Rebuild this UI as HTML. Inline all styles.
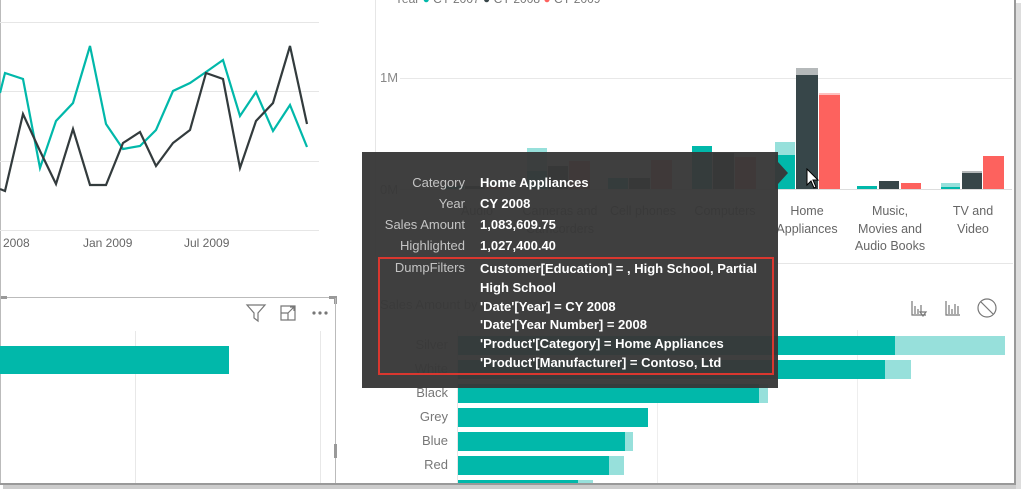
<!DOCTYPE html>
<html><head><meta charset="utf-8"><style>
body{margin:0;width:1024px;height:493px;background:#fff;position:relative;overflow:hidden;font-family:"Liberation Sans",sans-serif}
.a{position:absolute}
.t{position:absolute;font-size:12px;color:#666;white-space:nowrap}
.c{text-align:center;line-height:17.5px;font-size:12.5px;color:#666}
.lbl{position:absolute;right:0;text-align:right;width:100px;font-size:13px;color:#c4c4c4}
.val{position:absolute;left:118px;font-size:13px;color:#fff;font-weight:bold;white-space:nowrap}
</style></head><body>
<div class="a" style="left:0;top:0;width:1px;height:484px;background:#bbb"></div>
<div class="a" style="left:1014px;top:0;width:2px;height:484px;background:#999"></div>
<div class="a" style="left:0;top:483px;width:1017px;height:2px;background:#999"></div>
<div class="a" style="left:3px;top:485px;width:1018px;height:4px;background:#ccc"></div>
<div class="a" style="left:1016px;top:3px;width:5px;height:486px;background:#ddd"></div>

<svg class="a" style="left:0;top:0" width="340" height="260">
<g stroke="#e6e6e6" stroke-width="1"><line x1="0" y1="22.5" x2="319" y2="22.5"/><line x1="0" y1="91.5" x2="319" y2="91.5"/><line x1="0" y1="161.5" x2="319" y2="161.5"/><line x1="0" y1="230.5" x2="319" y2="230.5"/></g>
<polyline fill="none" stroke="#01b8aa" stroke-width="2.2" points="0,93 5,73 23,79 40,168 56,121 73,103 90,46 106,124 123,149 140,146 156,130 173,91 190,83 206,72 223,60 240,116 256,92 273,131 290,105 307,147"/>
<polyline fill="none" stroke="#333b3d" stroke-width="2.2" points="0,189 5,191 23,114 40,151 56,184 73,129 90,185 106,185 123,143 140,132 156,166 173,143 190,130 206,73 223,79 240,168 256,121 273,103 290,46 307,124"/>
</svg>
<div class="t" style="left:3px;top:236px">2008</div>
<div class="t" style="left:83px;top:236px">Jan 2009</div>
<div class="t" style="left:184px;top:236px">Jul 2009</div>

<div class="a" style="left:375px;top:0;width:1px;height:256px;background:#e6e6e6"></div>
<div class="t" style="left:395px;top:-8px;color:#777">Year <span style="color:#01b8aa">●</span> CY 2007 <span style="color:#374649">●</span> CY 2008 <span style="color:#fd625e">●</span> CY 2009</div>
<div class="t" style="left:380px;top:70px;font-size:13px;color:#888">1M</div>
<div class="a" style="left:400px;top:78px;width:612px;height:1px;background:#e8e8e8"></div>
<div class="t" style="left:380px;top:182px;font-size:13px;color:#888">0M</div>
<div class="a" style="left:400px;top:189px;width:612px;height:1px;background:#ddd"></div>
<svg class="a" style="left:0;top:0" width="1024" height="200">
<rect x="444" y="186" width="20" height="3" fill="#01b8aa"/><rect x="465" y="186" width="20" height="3" fill="#374649"/><rect x="486" y="187" width="20" height="2" fill="#fd625e"/>
<rect x="527" y="148" width="20" height="41" fill="#97e0db"/><rect x="527" y="171" width="20" height="18" fill="#01b8aa"/><rect x="548" y="166" width="20" height="23" fill="#374649"/><rect x="569" y="161" width="21" height="28" fill="#fd625e"/>
<rect x="608" y="178" width="20" height="11" fill="#01b8aa"/><rect x="629" y="178" width="21" height="11" fill="#374649"/><rect x="651" y="160" width="21" height="29" fill="#fd625e"/>
<rect x="692" y="146" width="20" height="43" fill="#01b8aa"/><rect x="713" y="153" width="21" height="36" fill="#374649"/><rect x="735" y="157" width="21" height="32" fill="#fd625e"/>
<rect x="775" y="142" width="20" height="47" fill="#97e0db"/><rect x="775" y="155" width="20" height="34" fill="#01b8aa"/>
<rect x="796" y="68" width="22" height="121" fill="#b5b9ba"/><rect x="796" y="75" width="22" height="114" fill="#374649"/>
<rect x="819" y="93" width="21" height="96" fill="#fec0bf"/><rect x="819" y="95" width="21" height="94" fill="#fd625e"/>
<rect x="857" y="186" width="20" height="3" fill="#01b8aa"/><rect x="879" y="181" width="20" height="8" fill="#374649"/><rect x="901" y="183" width="20" height="6" fill="#fd625e"/>
<rect x="941" y="183" width="19" height="6" fill="#97e0db"/><rect x="941" y="187" width="19" height="2" fill="#01b8aa"/><rect x="962" y="171" width="20" height="18" fill="#b5b9ba"/><rect x="962" y="173" width="20" height="16" fill="#374649"/><rect x="983" y="156" width="21" height="33" fill="#fd625e"/>
</svg>
<div class="t c" style="left:447px;top:203px;width:60px">Audio</div>
<div class="t c" style="left:520px;top:203px;width:80px">Cameras and<br>Camcorders</div>
<div class="t c" style="left:603px;top:203px;width:80px">Cell phones</div>
<div class="t c" style="left:685px;top:203px;width:80px">Computers</div>
<div class="t c" style="left:767px;top:203px;width:80px">Home<br>Appliances</div>
<div class="t c" style="left:850px;top:203px;width:80px">Music,<br>Movies and<br>Audio Books</div>
<div class="t c" style="left:933px;top:203px;width:80px">TV and<br>Video</div>

<div class="a" style="left:775px;top:263px;width:238px;height:1px;background:#e6e6e6"></div>
<div class="t" style="left:380px;top:297px;color:#888;font-size:13px">Sales Amount by</div>
<svg class="a" style="left:905px;top:296px" width="100" height="26" fill="none" stroke="#777" stroke-width="1.2">
<path d="M7 5v14h14M10 10v8M13 13v5M16 9v7M15 16l3 4 3-4z"/>
<path d="M41 5v14h14M44 9v9M47 13v5M50 8v10M53 10v8"/>
<circle cx="82" cy="12" r="9"/><line x1="76" y1="6" x2="88" y2="18"/>
</svg>
<div class="a" style="left:457px;top:330px;width:1px;height:153px;background:#e6e6e6"></div>
<div class="a" style="left:657px;top:330px;width:1px;height:153px;background:#eee"></div>
<div class="a" style="left:857px;top:330px;width:1px;height:153px;background:#eee"></div>
<div class="lbl" style="left:348px;top:337px;color:#888">Silver</div>
<div class="lbl" style="left:348px;top:361px;color:#888">White</div>
<div class="lbl" style="left:348px;top:385px;color:#777">Black</div>
<div class="lbl" style="left:348px;top:409px;color:#777">Grey</div>
<div class="lbl" style="left:348px;top:433px;color:#777">Blue</div>
<div class="lbl" style="left:348px;top:457px;color:#777">Red</div>
<svg class="a" style="left:0;top:0" width="1024" height="493">
<rect x="458" y="336" width="547" height="19" fill="#97e0db"/><rect x="458" y="336" width="437" height="19" fill="#01b8aa"/>
<rect x="458" y="360" width="453" height="19" fill="#97e0db"/><rect x="458" y="360" width="427" height="19" fill="#01b8aa"/>
<rect x="458" y="384" width="310" height="19" fill="#97e0db"/><rect x="458" y="384" width="301" height="19" fill="#01b8aa"/>
<rect x="458" y="408" width="190" height="19" fill="#01b8aa"/>
<rect x="458" y="432" width="175" height="19" fill="#97e0db"/><rect x="458" y="432" width="167" height="19" fill="#01b8aa"/>
<rect x="458" y="456" width="166" height="19" fill="#97e0db"/><rect x="458" y="456" width="151" height="19" fill="#01b8aa"/>
<rect x="458" y="480" width="135" height="3" fill="#97e0db"/><rect x="458" y="480" width="120" height="3" fill="#01b8aa"/>
</svg>

<div class="a" style="left:0;top:297px;width:336px;height:1px;background:#bbb"></div>
<div class="a" style="left:1px;top:296px;width:6px;height:3px;background:#999"></div>
<div class="a" style="left:329px;top:296px;width:8px;height:3px;background:#999"></div>
<div class="a" style="left:334px;top:296px;width:3px;height:8px;background:#999"></div>
<div class="a" style="left:335px;top:298px;width:1px;height:185px;background:#bbb"></div>
<div class="a" style="left:334px;top:444px;width:3px;height:14px;background:#999"></div>
<div class="a" style="left:135px;top:331px;width:1px;height:152px;background:#e8e8e8"></div>
<div class="a" style="left:320px;top:331px;width:1px;height:152px;background:#e8e8e8"></div>
<div class="a" style="left:0;top:346px;width:229px;height:28px;background:#01b8aa"></div>
<svg class="a" style="left:244px;top:302px" width="90" height="22" fill="none" stroke="#777" stroke-width="1.2">
<path d="M3 3h18l-7 8v8l-4-3v-5z"/>
<path d="M37 4h14v14h-14zM37 11h7v7M44 11l6-6M46 5h4v4"/>
<circle cx="70" cy="11" r="1" fill="#777"/><circle cx="76" cy="11" r="1" fill="#777"/><circle cx="82" cy="11" r="1" fill="#777"/>
</svg>

<div class="a" style="left:362px;top:152px;width:416px;height:236px;background:rgba(55,55,55,0.96)"></div>
<svg class="a" style="left:778px;top:162px" width="12" height="22"><path d="M0 0L10 11L0 22z" fill="rgba(55,55,55,0.96)"/></svg>
<div class="a" style="left:378px;top:257px;width:396px;height:118px;border:2px solid #d9372f;box-sizing:border-box"></div>
<div class="a" style="left:362px;top:152px;width:416px;height:236px">
<div class="lbl" style="left:3px;top:23px">Category</div><div class="val" style="top:23px">Home Appliances</div>
<div class="lbl" style="left:3px;top:44px">Year</div><div class="val" style="top:44px">CY 2008</div>
<div class="lbl" style="left:3px;top:65px">Sales Amount</div><div class="val" style="top:65px">1,083,609.75</div>
<div class="lbl" style="left:3px;top:86px">Highlighted</div><div class="val" style="top:86px">1,027,400.40</div>
<div class="lbl" style="left:3px;top:108px">DumpFilters</div>
<div class="val" style="top:108px;line-height:18.8px">Customer[Education] = , High School, Partial<br>High School<br>'Date'[Year] = CY 2008<br>'Date'[Year Number] = 2008<br>'Product'[Category] = Home Appliances<br>'Product'[Manufacturer] = Contoso, Ltd</div>
</div>

<svg class="a" style="left:806px;top:168px" width="14" height="22"><path d="M1 1L1 17L5 13L8 20L10 19L7 12L12 12Z" fill="#fff" stroke="#000" stroke-width="1"/></svg>
</body></html>
